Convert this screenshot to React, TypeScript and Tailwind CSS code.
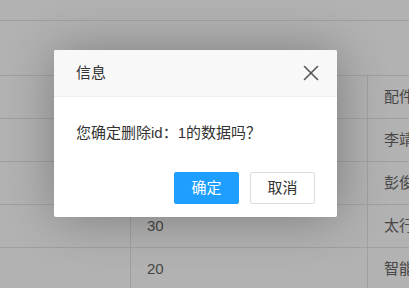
import { X } from "lucide-react";

const rows = [
  { a: "", b: "", c: "配件" },
  { a: "", b: "", c: "李靖" },
  { a: "", b: "", c: "彭俊" },
  { a: "", b: "30", c: "太行" },
  { a: "", b: "20", c: "智能" },
];

export default function App() {
  return (
    <div
      className="relative w-[409px] h-[288px] overflow-hidden bg-white text-[#666]"
      style={{ fontFamily: '"Liberation Sans", "Noto Sans CJK SC", sans-serif' }}
    >
      {/* page behind the mask */}
      <div className="h-[21px] border-b border-[#e6e6e6]" />
      <div className="h-[55px] border-b border-[#e6e6e6]" />
      {rows.map((r, i) => (
        <div key={i} className="h-[43px] border-b border-[#e6e6e6] flex text-[15px] leading-[20px]">
          <div className="w-[131px] shrink-0 border-r border-[#e6e6e6] px-[16px] flex items-center">{r.a}</div>
          <div className="w-[237px] shrink-0 border-r border-[#e6e6e6] px-[16px] flex items-center">{r.b}</div>
          <div className="flex-1 px-[16px] flex items-center whitespace-nowrap">{r.c}</div>
        </div>
      ))}

      {/* mask */}
      <div className="absolute inset-0 bg-black/30" />

      {/* layer dialog */}
      <div className="absolute left-[54px] top-[50px] w-[283px] h-[167px] bg-white rounded-[2px] shadow-[1px_1px_50px_rgba(0,0,0,0.3)] flex flex-col">
        <div className="h-[47px] bg-[#f8f8f8] border-b border-[#eee] rounded-t-[2px] flex items-center justify-between pl-[22px] pr-[13px]">
          <span className="text-[15px] leading-[20px] text-[#333]">信息</span>
          <X className="w-[26px] h-[26px] text-[#555]" strokeWidth={1.5} />
        </div>
        <div className="pl-[22px] pt-[24px] text-[15px] leading-[24px] text-[#333] whitespace-nowrap">
          您确定删除id：1的数据吗？
        </div>
        <div className="mt-[27px] pr-[22px] flex justify-end gap-[11px]">
          <button className="w-[65px] h-[32px] rounded-[2px] bg-[#1e9fff] border border-[#1e9fff] text-white text-[15px] leading-[30px]">
            确定
          </button>
          <button className="w-[65px] h-[32px] rounded-[2px] bg-white border border-[#dedede] text-[#333] text-[15px] leading-[30px]">
            取消
          </button>
        </div>
      </div>
    </div>
  );
}
